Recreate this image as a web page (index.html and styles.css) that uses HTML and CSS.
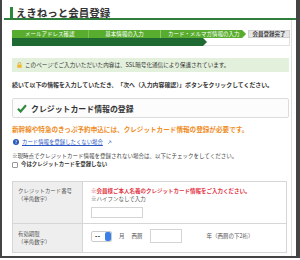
FILE: index.html
```html
<!DOCTYPE html>
<html lang="ja">
<head>
<meta charset="UTF-8" />
<title>えきねっと会員登録</title>
<link rel="stylesheet" href="styles.css">
</head>
<body>

<div class="frame">
  <div class="header">
    <h1 class="title">えきねっと会員登録</h1>
  </div>

  <div class="page">
    <div class="steps">
      <div class="steps-top">
        <div class="step s1">メールアドレス確認</div>
        <div class="step s2">基本情報の入力</div>
        <div class="step s3">カード・メルマガ情報の入力</div>
        <div class="step todo">会員登録完了</div>
      </div>
      <div class="progress">
        <div class="progress-bar"></div>
      </div>
    </div>

    <div class="ssl">
      <svg class="lock" width="5" height="6" viewBox="0 0 5 6">
        <path d="M1.2 2.6V1.7a1.3 1.3 0 0 1 2.6 0v0.9" fill="none" stroke="#c9a12a" stroke-width="0.8"/>
        <rect x="0.3" y="2.6" width="4.4" height="3.2" fill="#f2b82a"/>
      </svg>
      このページでご入力いただいた内容は、SSL暗号化通信により保護されています。
    </div>

    <p class="lead">続いて以下の情報を入力していただき、「次へ（入力内容確認）」ボタンをクリックしてください。</p>

    <div class="section">
      <svg class="check" width="10" height="9" viewBox="0 0 10 9">
        <path d="M1 4.8l2.6 2.7L9 1.2" fill="none" stroke="#2f8a3c" stroke-width="2.2"/>
      </svg>
      <h2>クレジットカード情報の登録</h2>
    </div>

    <p class="notice">新幹線や特急のきっぷ予約申込には、クレジットカード情報の登録が必要です。</p>

    <div class="help">
      <span class="help-icon">?</span>
      <a href="#" class="help-link">カード情報を登録したくない場合</a>
      <svg class="ext" width="5" height="5" viewBox="0 0 5 5">
        <path d="M1 4L4 1M2 1h2v2" fill="none" stroke="#6b8fd6" stroke-width="0.7"/>
      </svg>
    </div>

    <p class="note">※現時点でクレジットカード情報を登録されない場合は、以下にチェックをしてください。</p>
    <label class="skip"><span class="box"></span>今はクレジットカードを登録しない</label>

    <div class="form">
      <div class="row r1">
        <div class="label">クレジットカード番号<br>（半角数字）</div>
        <div class="field">
          <div class="red">※会員様ご本人名義のクレジットカード情報をご入力ください。</div>
          <div class="hint">※ハイフンなしで入力</div>
          <span class="input card"></span>
        </div>
      </div>
      <div class="row r2">
        <div class="label">有効期限<br>（半角数字）</div>
        <div class="field inline">
          <span class="select"><span class="dash">--</span><span class="spin"></span></span>
          <span class="unit">月</span>
          <span class="unit">西暦</span>
          <span class="input year"></span>
          <span class="unit after">年（西暦の下2桁）</span>
        </div>
      </div>
    </div>
  </div>
</div>

</body>
</html>
```

FILE: styles.css
```css
body {
  margin: 0;
  background: #fff;
  font-family: "Noto Sans CJK JP", "Noto Sans", sans-serif;
  color: #333;
}

.frame {
  width: 300px;
  height: 258px;
  box-sizing: border-box;
  border-left: 2px solid #444;
  border-right: 4px solid #444;
  border-bottom: 2px solid #444;
  overflow: hidden;
}

.header {
  height: 20px;
  border-bottom: 2px solid #2f7d3c;
  margin-left: 2px;
  padding: 7px 0 0 6px;
  box-sizing: border-box;
}

.title {
  margin: 0;
  border-left: 3px solid #2a8a3a;
  padding-left: 3px;
  font-size: 10.5px;
  line-height: 12px;
  height: 12px;
  font-weight: bold;
  color: #333;
}

.page {
  margin-right: 4px;
  padding: 10px 4px 0 10px;
  border-right: 1px solid #ddd;
  height: 236px;
  box-sizing: border-box;
}

/* progress steps */
.steps {
  width: 278px;
}

.steps-top {
  display: flex;
  height: 8px;
}

.step {
  font-size: 5.5px;
  line-height: 8px;
  color: #fff;
  text-align: center;
  background: #58ad2e;
}

.s1 { width: 76px; }
.s2 { width: 72px; border-left: 1px solid #7cc257; }
.s3 {
  width: 85px;
  border-left: 1px solid #7cc257;
  clip-path: polygon(0 0, calc(100% - 4px) 0, 100% 50%, calc(100% - 4px) 100%, 0 100%);
}

.step.todo {
  width: 42px;
  margin-left: 2px;
  background: #e6e6e6;
  color: #444;
  font-weight: bold;
  border: 1px solid #d0d0d0;
  box-sizing: border-box;
  line-height: 6px;
}

.progress {
  height: 8px;
  border: 1px solid #e2e2e2;
  border-top: none;
  box-sizing: border-box;
}

.progress-bar {
  width: 195px;
  height: 8px;
  margin-left: -1px;
  background: #1f6a33;
  clip-path: polygon(0 0, calc(100% - 4px) 0, 100% 50%, calc(100% - 4px) 100%, 0 100%);
}

.ssl {
  margin-top: 12px;
  width: 277px;
  height: 14px;
  background: #e3f0dc;
  font-size: 5.6px;
  line-height: 14px;
  padding-left: 5px;
  box-sizing: border-box;
  display: flex;
  align-items: center;
  gap: 3px;
}

.lead {
  margin: 8px 0 0;
  font-size: 5.9px;
  line-height: 9px;
  font-weight: bold;
  white-space: nowrap;
}

.section {
  margin-top: 9px;
  width: 277px;
  height: 20px;
  border: 1px solid #dcdcdc;
  border-radius: 2px;
  box-sizing: border-box;
  display: flex;
  align-items: center;
  padding-left: 4px;
  gap: 4px;
  background: #fcfcfc;
}

.section h2 {
  margin: 0;
  font-size: 7.9px;
  font-weight: bold;
  color: #333;
}

.notice {
  margin: 6px 0 0;
  font-size: 6.6px;
  line-height: 10px;
  font-weight: bold;
  color: #f08c1e;
  white-space: nowrap;
}

.help {
  margin-top: 4px;
  height: 8px;
  display: flex;
  align-items: center;
  gap: 2px;
  padding-left: 1px;
}

.help-icon {
  width: 6px;
  height: 6px;
  border-radius: 50%;
  background: #2557b8;
  color: #fff;
  font-size: 4.5px;
  line-height: 6px;
  text-align: center;
  font-weight: bold;
}

.help-link {
  font-size: 5.4px;
  color: #2a56c4;
  text-decoration: underline;
  margin-left: 1px;
}

.ext {
  margin-left: 2px;
}

.note {
  margin: 6px 0 0;
  font-size: 5.5px;
  line-height: 8px;
  color: #444;
  white-space: nowrap;
}

.skip {
  display: flex;
  align-items: center;
  gap: 3px;
  font-size: 5.4px;
  line-height: 9px;
  font-weight: bold;
}

.box {
  width: 4px;
  height: 4px;
  border: 1px solid #999;
  border-radius: 1px;
  background: #fff;
}

/* form table */
.form {
  margin-top: 12px;
  width: 273px;
  border: 1px solid #d6d6d6;
  border-bottom: none;
}

.row {
  display: flex;
  border-bottom: 1px solid #d6d6d6;
}

.r1 { height: 41px; }
.r2 { height: 28px; }

.label {
  width: 70px;
  flex-shrink: 0;
  background: #eee;
  border-right: 1px solid #d6d6d6;
  font-size: 5.4px;
  line-height: 8px;
  padding: 5px 0 0 5px;
  box-sizing: border-box;
  color: #555;
}

.r2 .label {
  padding-top: 6px;
}

.field {
  padding: 5px 0 0 8px;
  font-size: 5.5px;
  line-height: 8px;
  color: #555;
}

.red {
  color: #e2333f;
  font-weight: bold;
  white-space: nowrap;
}

.input {
  display: block;
  background: #fff;
  border: 1px solid #d4d4d4;
  box-sizing: border-box;
}

.card {
  width: 52px;
  height: 11px;
  margin-top: 4px;
}

.inline {
  display: flex;
  align-items: center;
  align-self: flex-start;
  padding-top: 5px;
  height: 14px;
}

.select {
  display: flex;
  align-items: center;
  width: 21px;
  height: 11px;
  border: 1px solid #ccc;
  border-radius: 2px;
  box-sizing: border-box;
  padding: 0 0 0 3px;
  justify-content: space-between;
  background: #fff;
}

.dash {
  font-family: "Liberation Sans", sans-serif;
  font-size: 7px;
  line-height: 8px;
  color: #444;
  font-weight: bold;
  letter-spacing: 0.5px;
}

.spin {
  width: 6px;
  height: 9px;
  background: #3a7ee6;
  border-radius: 2px;
}

.unit {
  margin-left: 7px;
}

.year {
  width: 32px;
  height: 14px;
  margin-left: 7px;
}

.unit.after {
  margin-left: 25px;
}
```
